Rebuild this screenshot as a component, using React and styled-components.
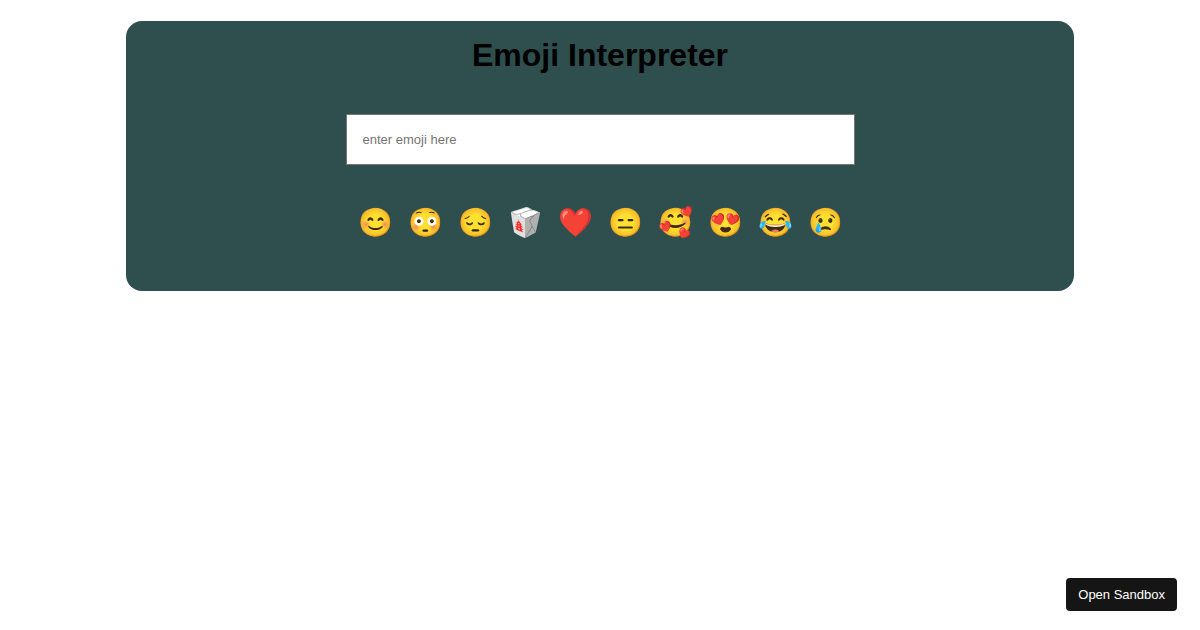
import React, { useState } from "react";
import styled, { createGlobalStyle } from "styled-components";

const Global = createGlobalStyle`
  body {
    margin: 8px;
    font-family: "Liberation Sans", Arial, sans-serif;
    background: #ffffff;
  }
`;

const Card = styled.div`
  width: 80%;
  margin: 13px auto 0;
  background: #2f4f4f;
  border-radius: 16px;
  text-align: center;
  padding: 16px 0 0;
  box-sizing: border-box;
  height: 270px;
`;

const Title = styled.h1`
  margin: 0 0 40px;
  font-size: 32px;
  font-weight: 700;
  line-height: 37px;
  color: #000;
`;

const Input = styled.input`
  width: 509px;
  height: 51px;
  box-sizing: border-box;
  border: 1px solid #767676;
  padding: 0 16px;
  font-size: 13px;
  font-family: "Liberation Sans", Arial, sans-serif;
  background: #fff;
  outline: none;
  &::placeholder {
    color: #757575;
  }
`;

const EmojiRow = styled.div`
  margin-top: 38px;
  display: flex;
  justify-content: center;
`;

const Emoji = styled.span`
  font-size: 28px;
  line-height: 40px;
  width: 50px;
  text-align: center;
  cursor: pointer;
  color: #000;
`;

const SandboxButton = styled.button`
  position: fixed;
  right: 23px;
  bottom: 19px;
  height: 33px;
  padding: 0 12px;
  background: #151515;
  color: #fff;
  border: none;
  border-radius: 4px;
  font-size: 13px;
  font-family: "Liberation Sans", Arial, sans-serif;
`;

const emojis = ["😊", "😳", "😔", "🥡", "❤️", "😑", "🥰", "😍", "😂", "😢"];

export default function App() {
  const [value, setValue] = useState("");
  return (
    <>
      <Global />
      <Card>
        <Title>Emoji Interpreter</Title>
        <Input
          placeholder="enter emoji here"
          value={value}
          onChange={(e) => setValue(e.target.value)}
        />
        <EmojiRow>
          {emojis.map((e, i) => (
            <Emoji key={i}>{e}</Emoji>
          ))}
        </EmojiRow>
      </Card>
      <SandboxButton>Open Sandbox</SandboxButton>
    </>
  );
}
